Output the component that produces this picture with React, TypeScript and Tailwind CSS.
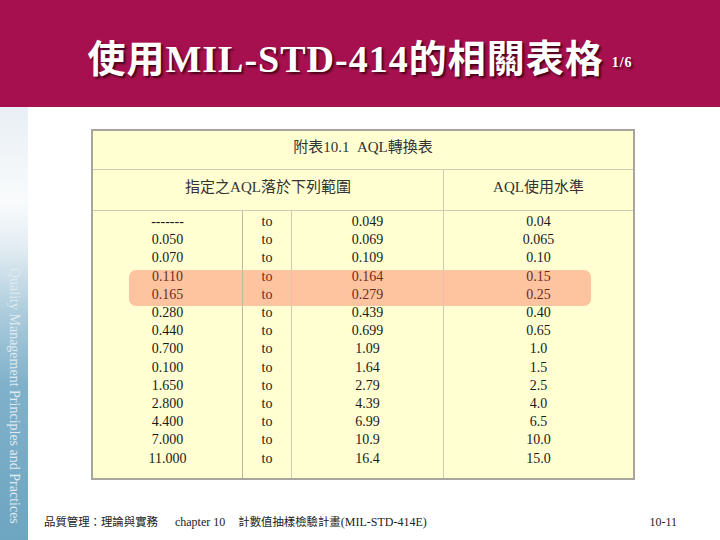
const col1 = ['-------', '0.050', '0.070', '0.110', '0.165', '0.280', '0.440', '0.700', '0.100', '1.650', '2.800', '4.400', '7.000', '11.000'];
const col3 = ['0.049', '0.069', '0.109', '0.164', '0.279', '0.439', '0.699', '1.09', '1.64', '2.79', '4.39', '6.99', '10.9', '16.4'];
const col4 = ['0.04', '0.065', '0.10', '0.15', '0.25', '0.40', '0.65', '1.0', '1.5', '2.5', '4.0', '6.5', '10.0', '15.0'];

const serif = "font-['Liberation_Serif','Noto_Sans_CJK_TC',serif]";

function Column({ items, className = '' }: { items: string[]; className?: string }) {
  return (
    <div className={`flex flex-col items-center pt-[2px] text-[14px] leading-[18.2px] ${className}`}>
      {items.map((v, i) => (
        <div key={i} className={i === 3 || i === 4 ? 'text-[#6e2a1e]' : ''}>
          {v}
        </div>
      ))}
    </div>
  );
}

export default function App() {
  return (
    <div className={`w-[720px] h-[540px] flex flex-col bg-white overflow-hidden ${serif}`}>
      <div className="h-[107px] bg-[#a6104e] flex items-center justify-center pt-[10px]">
        <h1 className="text-white font-bold text-[38px] leading-none [text-shadow:2px_2px_2px_rgba(40,0,10,0.75)] tracking-[1px]">
          使用MIL-STD-414的相關表格
          <span className="text-[14px] ml-[8px] align-middle">1/6</span>
        </h1>
      </div>

      <div className="flex flex-1">
        <div className="w-[28px] bg-[linear-gradient(to_bottom,#e9eff5_0%,#f9fbfc_22%,#e4edf3_32%,#aecddd_47%,#80b1ca_64%,#6ea5c1_100%)] flex justify-center pt-[161px]">
          <span className="[writing-mode:vertical-rl] text-[14px] text-[#dfeaf1] leading-none whitespace-nowrap">
            Quality Management Principles and Practices
          </span>
        </div>

        <div className="flex-1 flex flex-col">
          <div className="relative ml-[63px] mt-[22px] w-[544px] border-2 border-[#a6a69e] bg-[#ffffd2] text-[#1a1a1a]">
            <div className="absolute left-[36px] top-[139px] w-[462px] h-[36px] rounded-[7px] bg-[#fec4a0]" />
            <div className="relative h-[39px] border-b border-[#cdcdb6] text-center pt-[5px] text-[15px] text-[#333]">
              附表10.1&nbsp;&nbsp;AQL轉換表
            </div>
            <div className="relative grid grid-cols-[350px_190px] h-[41px] border-b border-[#cdcdb6] text-[15px] text-[#333]">
              <div className="text-center pt-[6px]">指定之AQL落於下列範圍</div>
              <div className="text-center pt-[6px] border-l border-[#cdcdb6]">AQL使用水準</div>
            </div>
            <div className="relative grid grid-cols-[149px_49px_152px_190px] h-[267px]">
              <Column items={col1} />
              <Column items={col1.map(() => 'to')} className="border-l border-[#b8b8a4]" />
              <Column items={col3} className="border-l border-[#cdcdb6]" />
              <Column items={col4} className="border-l border-[#cdcdb6]" />
            </div>
          </div>

          <div className="mt-[33px] flex justify-between items-center pl-[16px] pr-[43px] text-[12px] text-[#222]">
            <div className="flex items-center">
              <span className="text-[11.4px]">品質管理：理論與實務</span>
              <span className="ml-[17px]">chapter 10</span>
              <span className="ml-[13px]">
                <span className="text-[11.4px]">計數值抽樣檢驗計畫</span>(MIL-STD-414E)
              </span>
            </div>
            <span>10-11</span>
          </div>
        </div>
      </div>
    </div>
  );
}
